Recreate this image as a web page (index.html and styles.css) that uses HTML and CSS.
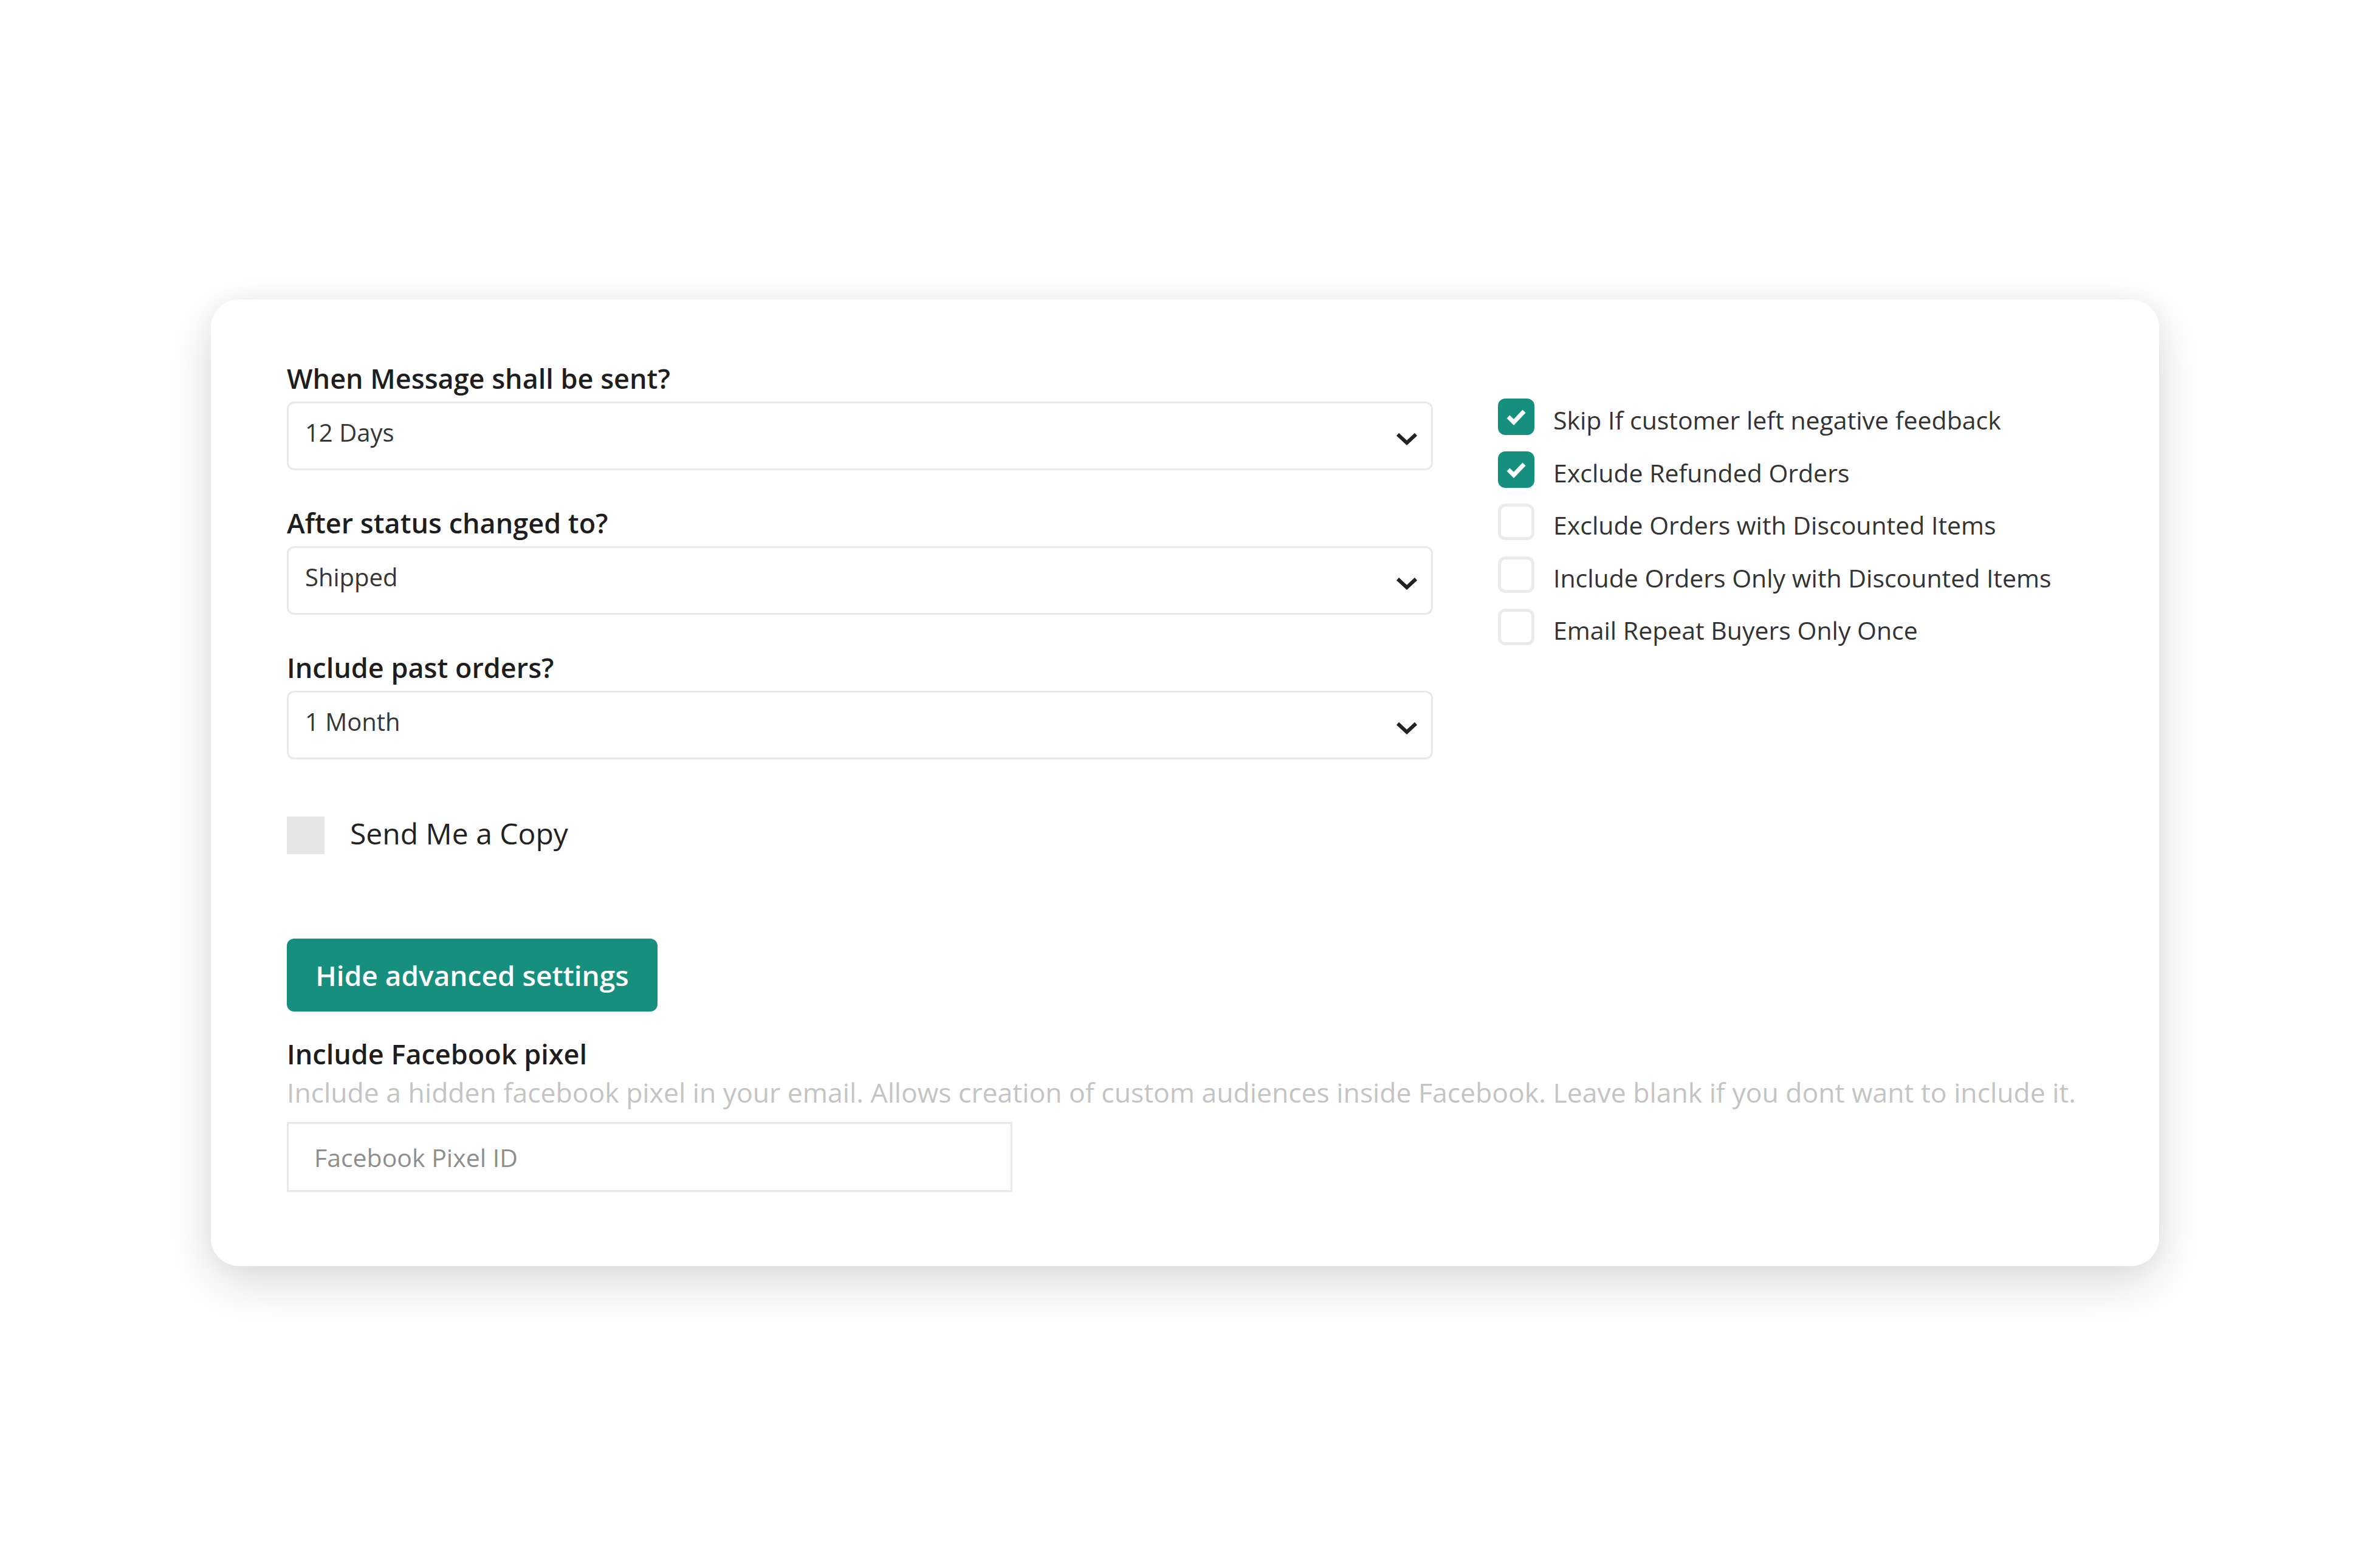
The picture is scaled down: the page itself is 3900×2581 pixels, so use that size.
FILE: index.html
```html
<!DOCTYPE html>
<html lang="en">
<head>
<meta charset="utf-8">
<title>Advanced settings</title>
<link rel="stylesheet" href="styles.css">
</head>
<body>
<div class="card">
  <div class="top">
    <div class="left">
      <div class="field">
        <div class="label">When Message shall be sent?</div>
        <div class="select"><span>12 Days</span><svg class="chev" viewBox="0 0 36 24"><polyline points="3,4 18,18 33,4"/></svg></div>
      </div>
      <div class="field">
        <div class="label">After status changed to?</div>
        <div class="select"><span>Shipped</span><svg class="chev" viewBox="0 0 36 24"><polyline points="3,4 18,18 33,4"/></svg></div>
      </div>
      <div class="field">
        <div class="label">Include past orders?</div>
        <div class="select"><span>1 Month</span><svg class="chev" viewBox="0 0 36 24"><polyline points="3,4 18,18 33,4"/></svg></div>
      </div>
      <div class="copy">
        <span class="square"></span>
        <span class="copy-text">Send Me a Copy</span>
      </div>
    </div>
    <div class="right">
      <div class="opt"><span class="cb on"><svg viewBox="0 0 60 60"><polyline points="17,30 26,39 43,21"/></svg></span><span class="opt-text">Skip If customer left negative feedback</span></div>
      <div class="opt"><span class="cb on"><svg viewBox="0 0 60 60"><polyline points="17,30 26,39 43,21"/></svg></span><span class="opt-text">Exclude Refunded Orders</span></div>
      <div class="opt"><span class="cb"></span><span class="opt-text">Exclude Orders with Discounted Items</span></div>
      <div class="opt"><span class="cb"></span><span class="opt-text">Include Orders Only with Discounted Items</span></div>
      <div class="opt"><span class="cb"></span><span class="opt-text">Email Repeat Buyers Only Once</span></div>
    </div>
  </div>
  <button class="btn">Hide advanced settings</button>
  <div class="label fb-label">Include Facebook pixel</div>
  <div class="help">Include a hidden facebook pixel in your email. Allows creation of custom audiences inside Facebook. Leave blank if you dont want to include it.</div>
  <div class="input">Facebook Pixel ID</div>
</div>
</body>
</html>
```
FILE: styles.css
```css
html, body {
  margin: 0;
  padding: 0;
  background: #ffffff;
}
body {
  font-family: "Open Sans", "Liberation Sans", sans-serif;
  width: 3900px;
  height: 2581px;
  overflow: hidden;
}
.card {
  box-sizing: border-box;
  width: 3206px;
  margin: 493px auto 0;
  background: #ffffff;
  border-radius: 46px;
  padding: 101px 125px 122px 125px;
  box-shadow: 0 28px 80px rgba(0, 0, 0, 0.14), 0 0 36px rgba(0, 0, 0, 0.04);
}
.top {
  display: grid;
  grid-template-columns: 1886px 1fr;
  column-gap: 107px;
}
.label {
  font-size: 45px;
  line-height: 57px;
  font-weight: 600;
  color: #1e1e1e;
}
.field + .field {
  margin-top: 58px;
}
.select {
  box-sizing: border-box;
  margin-top: 10px;
  height: 113px;
  border: 3px solid #e9e9ea;
  border-radius: 12px;
  display: flex;
  align-items: center;
  justify-content: space-between;
  padding: 0 22px 12px 27px;
  font-size: 40px;
  color: #363636;
}
.chev {
  width: 36px;
  height: 24px;
  margin-top: 22px;
  fill: none;
  stroke: #222222;
  stroke-width: 6;
}
.copy {
  margin-top: 94px;
  height: 62px;
  display: flex;
  align-items: flex-start;
  gap: 42px;
}
.square {
  width: 62px;
  height: 62px;
  background: #e6e6e6;
  flex: none;
}
.copy-text {
  font-size: 48px;
  line-height: 56px;
  color: #222222;
}
.right {
  margin-top: 62px;
  display: flex;
  flex-direction: column;
  gap: 26.5px;
}
.opt {
  display: flex;
  align-items: flex-start;
  height: 60px;
  gap: 31px;
}
.cb {
  box-sizing: border-box;
  width: 60px;
  height: 60px;
  flex: none;
  border-radius: 12px;
  border: 5px solid #ebebec;
  background: #ffffff;
}
.cb.on {
  border: none;
  background: #178f7f;
}
.cb svg {
  display: block;
  width: 60px;
  height: 60px;
  fill: none;
  stroke: #ffffff;
  stroke-width: 7;
}
.opt-text {
  font-size: 41px;
  line-height: 60px;
  padding-top: 5px;
  color: #333333;
  white-space: nowrap;
}
.btn {
  display: block;
  margin-top: 139px;
  width: 610px;
  height: 120px;
  border: none;
  border-radius: 12px;
  background: #178f7f;
  color: #ffffff;
  font-family: "Open Sans", "Liberation Sans", sans-serif;
  font-size: 46px;
  font-weight: 600;
  padding: 0;
}
.fb-label {
  margin-top: 41px;
}
.help {
  margin-top: 5px;
  font-size: 44.5px;
  line-height: 60px;
  color: #c4c4c4;
  white-space: nowrap;
}
.input {
  box-sizing: border-box;
  margin-top: 19px;
  width: 1194px;
  height: 115px;
  border: 3px solid #e8e8e8;
  display: flex;
  align-items: center;
  padding-left: 42px;
  font-size: 41px;
  color: #8e8e8e;
}
```
